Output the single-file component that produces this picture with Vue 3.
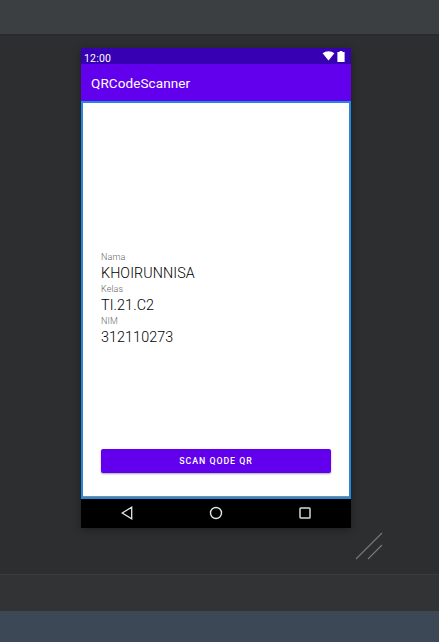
<template>
  <div class="ide">
    <div class="toolbar"></div>
    <div class="canvas">
      <div class="phone">
        <div class="status-bar">
          <span class="clock">12:00</span>
          <div class="status-icons">
            <svg width="13" height="10" viewBox="0 0 14 11">
              <path d="M0.5 2.6C4.2 -0.6 9.8 -0.6 13.5 2.6L7 10.5Z" fill="#fff" />
            </svg>
            <svg width="8" height="11" viewBox="0 0 8 11">
              <path d="M2.6 0H5.4V1H7.6V11H0.4V1H2.6Z" fill="#fff" />
            </svg>
          </div>
        </div>
        <div class="app-bar">QRCodeScanner</div>
        <div class="screen">
          <div class="fields">
            <template v-for="field in fields" :key="field.label">
              <div class="label">{{ field.label }}</div>
              <div class="value">{{ field.value }}</div>
            </template>
          </div>
          <button class="scan-btn" type="button">Scan Qode QR</button>
        </div>
        <div class="nav-bar">
          <svg width="12" height="14" viewBox="0 0 12 14">
            <path d="M10.7 1.2V12.8L1.2 7Z" fill="none" stroke="#e4e4e4" stroke-width="1.3" />
          </svg>
          <svg width="14" height="14" viewBox="0 0 14 14">
            <circle cx="7" cy="7" r="5.5" fill="none" stroke="#e4e4e4" stroke-width="1.4" />
          </svg>
          <svg width="12" height="12" viewBox="0 0 12 12">
            <rect x="1" y="1" width="10" height="10" rx="0.8" fill="none" stroke="#d8d8d8" stroke-width="1.5" />
          </svg>
        </div>
      </div>
      <svg class="resize-grip" width="28" height="28" viewBox="0 0 28 28">
        <path d="M1 27L27 1M13 27L27 13" stroke="#77797a" stroke-width="1.1" fill="none" />
      </svg>
    </div>
    <div class="footer"></div>
    <div class="bottom-strip"></div>
  </div>
</template>

<script setup>
const fields = [
  { label: 'Nama', value: 'KHOIRUNNISA' },
  { label: 'Kelas', value: 'TI.21.C2' },
  { label: 'NIM', value: '312110273' }
]
</script>

<style>
html,
body {
  margin: 0;
  background: #2d2e30;
}
</style>

<style scoped>
.ide {
  width: 439px;
  height: 642px;
  display: flex;
  flex-direction: column;
  overflow: hidden;
  background: #2d2e30;
  font-family: Roboto, "Liberation Sans", sans-serif;
}

.toolbar {
  height: 34px;
  flex: none;
  background: #3c3f41;
  border-bottom: 2px solid #292a2c;
}

.canvas {
  height: 538px;
  flex: none;
  position: relative;
  padding: 12px 0 0 81px;
  box-sizing: border-box;
  background: #2d2e30;
}

.phone {
  width: 270px;
  height: 480px;
  display: flex;
  flex-direction: column;
  box-shadow: 0 2px 8px rgba(0, 0, 0, 0.35);
}

.status-bar {
  height: 16px;
  flex: none;
  display: flex;
  align-items: center;
  justify-content: space-between;
  padding: 0 6px 0 3px;
  background: #3700b3;
  color: #fff;
}

.clock {
  font-size: 10.5px;
  letter-spacing: 0.2px;
  position: relative;
  top: 2px;
}

.status-icons {
  display: flex;
  align-items: center;
  gap: 2px;
}

.app-bar {
  height: 37px;
  flex: none;
  display: flex;
  align-items: center;
  box-sizing: border-box;
  padding-left: 10px;
  background: #6200ee;
  color: #fff;
  font-size: 13.5px;
  font-weight: 400;
  letter-spacing: 0.1px;
}

.screen {
  height: 398px;
  flex: none;
  box-sizing: border-box;
  display: flex;
  flex-direction: column;
  padding: 0 18px;
  background: #fff;
  border: 2px solid #2488e0;
  border-bottom-width: 2px;
  box-shadow: inset 0 -1px 0 #8a8a8a;
}

.fields {
  margin-top: 148px;
}

.label {
  height: 13px;
  font-size: 9px;
  font-weight: 300;
  line-height: 13px;
  letter-spacing: 0.1px;
  color: #666;
}

.value {
  height: 19px;
  font-size: 14.3px;
  font-weight: 300;
  line-height: 19px;
  letter-spacing: 0.1px;
  color: #000;
}

.scan-btn {
  width: 230px;
  height: 24px;
  margin-top: auto;
  margin-bottom: 24px;
  border: none;
  border-radius: 2px;
  background: #6200ee;
  box-shadow: 0 1px 2px rgba(0, 0, 0, 0.35);
  color: #fff;
  font-family: inherit;
  font-size: 8.8px;
  font-weight: 500;
  letter-spacing: 0.95px;
  text-transform: uppercase;
}

.nav-bar {
  height: 29px;
  flex: none;
  display: flex;
  align-items: center;
  justify-content: space-between;
  box-sizing: border-box;
  padding: 0 40px 2px;
  background: #000;
}

.resize-grip {
  position: absolute;
  left: 355px;
  top: 496px;
}

.footer {
  height: 37px;
  flex: none;
  box-sizing: border-box;
  background: #313335;
  border-top: 1px solid #393b3d;
}

.bottom-strip {
  flex: 1;
  background: #3c4856;
}
</style>
